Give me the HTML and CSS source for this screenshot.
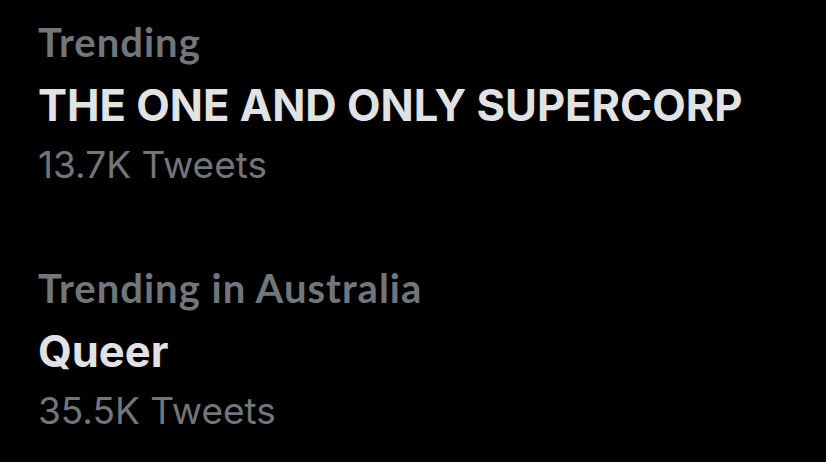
FILE: index.html
```html
<!DOCTYPE html>
<html>
<head>
<meta charset="utf-8">
<link rel="stylesheet" href="styles.css">
</head>
<body>
<div class="list">
  <div class="trend">
    <div class="label">Trending</div>
    <div class="title">THE ONE AND ONLY SUPERCORP</div>
    <div class="count">13.7K Tweets</div>
  </div>
  <div class="trend">
    <div class="label">Trending in Australia</div>
    <div class="title">Queer</div>
    <div class="count">35.5K Tweets</div>
  </div>
</div>
</body>
</html>
```
FILE: styles.css
```css
html, body {
  margin: 0;
  padding: 0;
  background: #000;
  width: 826px;
  height: 462px;
  overflow: hidden;
}
.list {
  display: flex;
  flex-direction: column;
  gap: 64px;
  padding: 12px 0 0 38px;
}
.trend {
  display: flex;
  flex-direction: column;
}
.label {
  font-family: "Lato", "Noto Sans", sans-serif;
  font-weight: 700;
  font-size: 40px;
  letter-spacing: 1px;
  line-height: 60px;
  color: #71767b;
}
.title {
  font-family: "Inter", "Liberation Sans", sans-serif;
  font-weight: 700;
  font-size: 43.5px;
  line-height: 62px;
  padding-top: 2px;
  color: #e0e2e3;
}
.count {
  font-family: "Inter", "Liberation Sans", sans-serif;
  font-weight: 400;
  font-size: 37px;
  line-height: 58px;
  color: #71767b;
}
```
